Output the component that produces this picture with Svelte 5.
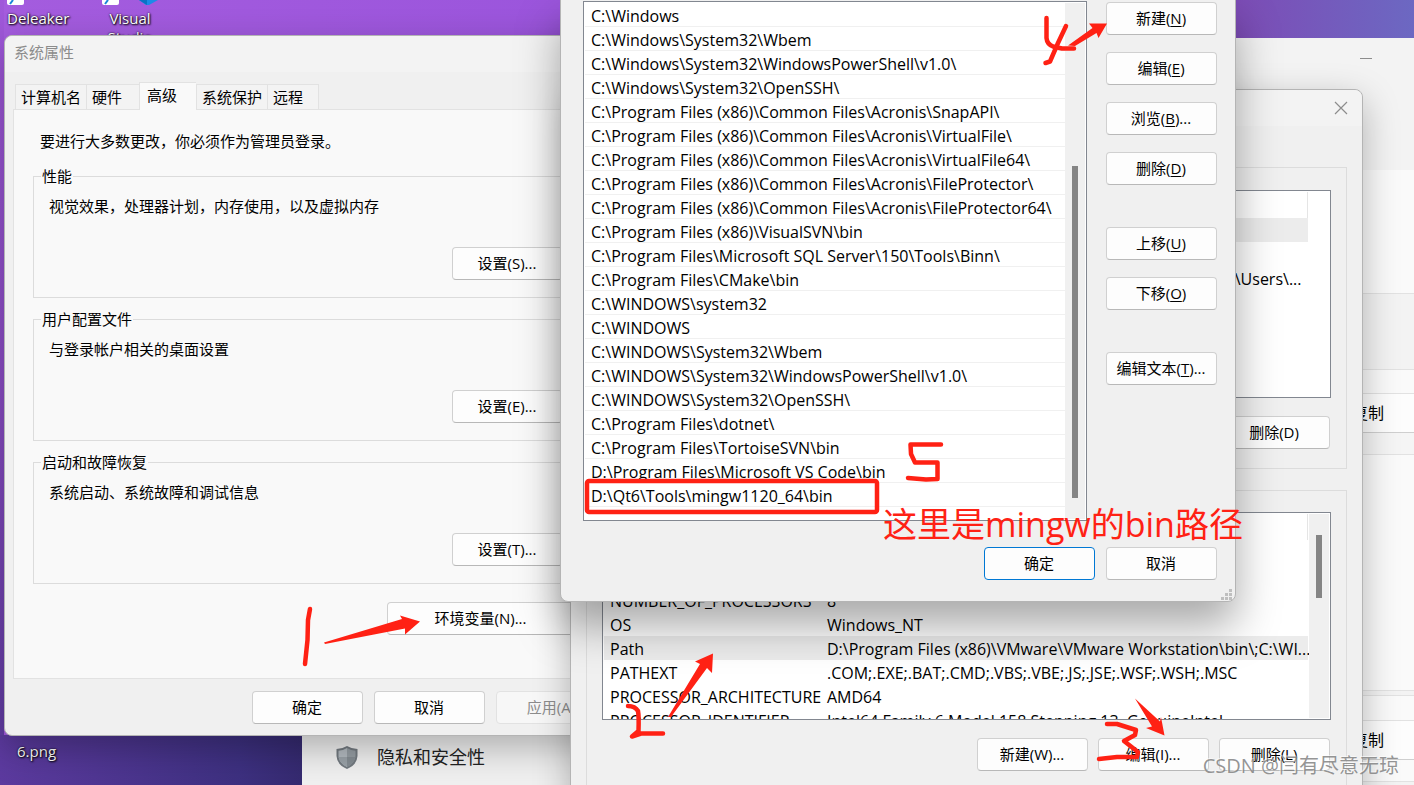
<script>
  const tabs = ['计算机名', '硬件', '高级', '系统保护', '远程'];
  let activeTab = '高级';

  const groups = [
    { title: '性能', text: '视觉效果，处理器计划，内存使用，以及虚拟内存', button: '设置(S)...' },
    { title: '用户配置文件', text: '与登录帐户相关的桌面设置', button: '设置(E)...' },
    { title: '启动和故障恢复', text: '系统启动、系统故障和调试信息', button: '设置(T)...' }
  ];

  const paths = [
    'C:\\Windows',
    'C:\\Windows\\System32\\Wbem',
    'C:\\Windows\\System32\\WindowsPowerShell\\v1.0\\',
    'C:\\Windows\\System32\\OpenSSH\\',
    'C:\\Program Files (x86)\\Common Files\\Acronis\\SnapAPI\\',
    'C:\\Program Files (x86)\\Common Files\\Acronis\\VirtualFile\\',
    'C:\\Program Files (x86)\\Common Files\\Acronis\\VirtualFile64\\',
    'C:\\Program Files (x86)\\Common Files\\Acronis\\FileProtector\\',
    'C:\\Program Files (x86)\\Common Files\\Acronis\\FileProtector64\\',
    'C:\\Program Files (x86)\\VisualSVN\\bin',
    'C:\\Program Files\\Microsoft SQL Server\\150\\Tools\\Binn\\',
    'C:\\Program Files\\CMake\\bin',
    'C:\\WINDOWS\\system32',
    'C:\\WINDOWS',
    'C:\\WINDOWS\\System32\\Wbem',
    'C:\\WINDOWS\\System32\\WindowsPowerShell\\v1.0\\',
    'C:\\WINDOWS\\System32\\OpenSSH\\',
    'C:\\Program Files\\dotnet\\',
    'C:\\Program Files\\TortoiseSVN\\bin',
    'D:\\Program Files\\Microsoft VS Code\\bin',
    'D:\\Qt6\\Tools\\mingw1120_64\\bin'
  ];

  // gap: extra room above the button
  const actions = [
    { label: '新建', key: 'N' },
    { label: '编辑', key: 'E' },
    { label: '浏览', key: 'B', more: true },
    { label: '删除', key: 'D' },
    { label: '上移', key: 'U', gap: true },
    { label: '下移', key: 'O' },
    { label: '编辑文本', key: 'T', more: true, gap: true }
  ];

  const systemVars = [
    ['', ''],
    ['', ''],
    ['NUMBER_OF_PROCESSORS', '8'],
    ['OS', 'Windows_NT'],
    ['Path', 'D:\\Program Files (x86)\\VMware\\VMware Workstation\\bin\\;C:\\WI...'],
    ['PATHEXT', '.COM;.EXE;.BAT;.CMD;.VBS;.VBE;.JS;.JSE;.WSF;.WSH;.MSC'],
    ['PROCESSOR_ARCHITECTURE', 'AMD64'],
    ['PROCESSOR_IDENTIFIER', 'Intel64 Family 6 Model 158 Stepping 13, GenuineIntel']
  ];
</script>

<main class="desktop">
  <div class="shortcut deleaker">
    <svg width="18" height="5" viewBox="0 0 18 5"><path d="M0 0h17v3q0 2-2 2H2Q0 5 0 3z" fill="#fff" /><path d="M3 4 6 0" stroke="#1a86d8" stroke-width="2" /></svg>
    <span>Deleaker</span>
  </div>
  <div class="shortcut visual">
    <svg width="56" height="5" viewBox="0 0 56 5"><path d="M0 0h17v3q0 2-2 2H2Q0 5 0 3z" fill="#fff" /><path d="M3 4 6 0" stroke="#1a86d8" stroke-width="2" /><path d="M37 0h19l-9 5h-3z" fill="#1b8be8" /><path d="M37 0h8v5z" fill="#0b72c4" /></svg>
    <span>Visual<br />Studio</span>
  </div>
  <div class="shortcut png"><span>6.png</span></div>

  <section class="settings">
    <header><button class="minimize" aria-label="最小化"></button></header>
    <div class="block b1"></div>
    <div class="block b2"></div>
    <div class="block b3"></div>
    <div class="card"><button>复制</button></div>
    <div class="block b4"></div>
    <div class="block b5"></div>
    <div class="block b6"></div>
    <div class="block b7"></div>
    <div class="card"><button>复制</button></div>
    <div class="block b8"></div>
    <a class="privacy" href="#privacy">
      <svg width="24" height="25" viewBox="0 0 24 25">
        <path d="M12 1Q7 4 1.500 4V11Q2 20 12 24Q22 20 22.500 11V4Q17 4 12 1z" fill="#737a80" />
        <path d="M12 3Q8 5.500 3.500 5.700V11Q4 18 12 22z" fill="#b3bac0" />
        <path d="M12 3Q16 5.500 20.500 5.700V11Q20 18 12 22z" fill="#959da3" />
        <path d="M3.500 12H12V22Q5 19 3.500 12z" fill="#9aa2a8" />
        <path d="M12 12H20.400Q19 19 12 22z" fill="#848c92" />
      </svg>
      隐私和安全性
    </a>
  </section>

  <section class="window system">
    <header class="title">系统属性</header>
    <div class="tabs" role="tablist">
      {#each tabs as tab}
        <button role="tab" aria-selected={tab === activeTab} class:active={tab === activeTab} on:click={() => (activeTab = tab)}>{tab}</button>
      {/each}
    </div>
    <div class="panel">
      <p>要进行大多数更改，你必须作为管理员登录。</p>
      {#each groups as group}
        <fieldset class="group">
          <legend>{group.title}</legend>
          <span>{group.text}</span>
          <button class="btn">{group.button}</button>
        </fieldset>
      {/each}
      <button class="btn env">环境变量(N)...</button>
    </div>
    <footer>
      <button class="btn">确定</button>
      <button class="btn">取消</button>
      <button class="btn" disabled>应用(A)</button>
    </footer>
  </section>

  <section class="window variables">
    <header class="title">
      <button class="close" aria-label="关闭">
        <svg width="14" height="14" viewBox="0 0 14 14"><path d="M1 1 13 13M13 1 1 13" stroke="#8c8c8c" stroke-width="1.200" /></svg>
      </button>
    </header>
    <div class="varbox">
      <div class="listview">
        <table>
          <thead><tr><th></th><th></th></tr></thead>
          <tbody>
            <tr class="selected"><td></td><td></td></tr>
            <tr><td></td><td></td></tr>
            <tr><td></td><td class="right">C:\Users\...</td></tr>
          </tbody>
        </table>
      </div>
      <div class="buttons"><button class="btn">删除(D)</button></div>
    </div>
    <div class="varbox">
      <div class="listview">
        <table>
          <thead><tr><th></th><th></th></tr></thead>
          <tbody>
            {#each systemVars as [name, value]}
              <tr class:selected={name === 'Path'}><td>{name}</td><td>{value}</td></tr>
            {/each}
          </tbody>
        </table>
        <div class="track"><div class="thumb"></div></div>
      </div>
      <div class="buttons">
        <button class="btn">新建(W)...</button>
        <button class="btn">编辑(I)...</button>
        <button class="btn">删除(L)</button>
      </div>
    </div>
  </section>

  <section class="window path">
    <div class="editor">
      <div class="pathlist">
        <ul>
          {#each paths as path}
            <li>{path}</li>
          {/each}
        </ul>
        <div class="track"><div class="thumb"></div></div>
      </div>
      <div class="actions">
        {#each actions as a}
          <button class="btn" class:gap={a.gap}>{a.label}(<u>{a.key}</u>){a.more ? '...' : ''}</button>
        {/each}
      </div>
    </div>
    <footer>
      <button class="btn primary">确定</button>
      <button class="btn">取消</button>
    </footer>
    <svg class="grip" width="12" height="12" viewBox="0 0 12 12" fill="#bfbfbf">
      <path d="M8 0h3v3H8zM4 4h3v3H4zM8 4h3v3H8zM0 8h3v3H0zM4 8h3v3H4zM8 8h3v3H8z" />
    </svg>
  </section>

  <!-- hand-drawn step marks -->
  <svg class="marks" aria-hidden="true">
    <g fill="none" stroke="#ff2114" stroke-width="4.500" stroke-linecap="round" stroke-linejoin="round">
      <path d="M310 609 308 620 307.500 640 305 664" />
      <path d="M628 706Q635 706 638 711Q639 716 638.500 731L632 736.500 641 733.500H663" />
      <path d="M1107 724H1117L1136 730 1135 735 1124 741 1138 752 1137 757H1117L1099 759" />
      <path d="M1046.500 18V38Q1047 44 1053 46.500L1062 48.500H1074" />
      <path d="M1066 26 1058 43 1050 61.500 1045.500 63" />
      <path d="M941 444.500H910.500L911 454 915 462.500H937.500V479L926 479.500 908 478" />
      <rect x="587" y="481" width="290" height="31" rx="2" />
    </g>
    <g fill="#ff2114">
      <path d="M324 642.500 402 619 400 615.500 420 621.500 405 634.500V628.500L325 644z" />
      <path d="M668 717 700 664 695 661.500 713 653.500 712 673 707 668 671 717z" />
      <path d="M1135 698.500 1160 721.500 1161 717 1164.500 735.500 1146 728 1152 726.500z" />
      <path d="M1068 45.500 1092.500 28 1089 23.500H1107L1098.500 38 1096.500 33 1075 46z" />
    </g>
  </svg>
  <div class="note">这里是mingw的bin路径</div>
  <div class="watermark">CSDN @闫有尽意无琼</div>
</main>

<style>
  :global(body) {
    margin: 0;
  }
  .desktop {
    position: relative;
    min-height: 100vh;
    overflow: hidden;
    background:
      linear-gradient(to right, #5c3a9f, #3d3080 240px, #352a70 302px) bottom left / 302px 50px no-repeat,
      linear-gradient(#a058da, #8a4cc4 50%, #5c3a9f) left / 4px 100% no-repeat,
      linear-gradient(to right, #a45cde, #9b55dc 560px, #7d4cb6 1235px, #6c68c2);
    font: 15px/24px "Open Sans", "Noto Sans CJK SC", sans-serif;
    color: #000;
  }
  button {
    font: inherit;
    color: inherit;
    margin: 0;
    padding: 0;
    border: none;
    background: none;
  }
  .btn {
    box-sizing: border-box;
    width: 111px;
    height: 33px;
    padding: 0 1px 2px 0;
    border: 1px solid #d0d0d0;
    border-bottom-color: #b8b8b8;
    border-radius: 4px;
    background: #fdfdfd;
    white-space: nowrap;
  }
  .btn:hover {
    background: #e5f1fb;
  }
  .btn:disabled {
    color: #8c8c8c;
    border-color: #e2e2e2;
    background: #f7f7f7;
  }
  .btn.primary {
    border-color: #0078d4;
  }
  .btn u {
    text-underline-offset: 2px;
  }

  .shortcut {
    position: absolute;
    color: #fff;
    line-height: 19px;
    font-size: 15px;
    text-align: center;
    text-shadow: 1px 1px 2px #000, 0 0 2px #000;
  }
  .shortcut svg {
    display: block;
    margin-bottom: 4px;
  }
  .deleaker {
    left: 7px;
    top: 0;
  }
  .visual {
    left: 102px;
    top: 0;
  }
  .png {
    left: 17px;
    top: 742px;
  }

  .settings {
    position: absolute;
    left: 302px;
    right: 0;
    top: 38px;
    bottom: 0;
    background: #f3f3f3;
  }
  .settings header {
    height: 132px;
    text-align: right;
  }
  .minimize {
    width: 12px;
    height: 1px;
    margin: 20px 42px 0 0;
    vertical-align: top;
    background: #8c8c8c;
  }
  .block {
    box-sizing: border-box;
    background: #fafafa;
    border-bottom: 1px solid #e2e2e2;
  }
  .b1 { height: 124px; }
  .b2 { height: 76px; background: #f3f3f3; }
  .b3 { height: 24px; }
  .b4 { height: 22px; background: #f5f5f5; }
  .b5 { height: 236px; }
  .b6 { height: 5px; background: #f3f3f3; }
  .b7 { height: 25px; }
  .b8 { height: 22px; }
  .card {
    box-sizing: border-box;
    height: 39px;
    padding-right: 30px;
    border-bottom: 1px solid #cfcfcf;
    background: #fdfdfd;
    text-align: right;
    font-size: 16px;
    line-height: 38px;
  }
  .privacy {
    position: absolute;
    left: 0;
    bottom: 0;
    box-sizing: border-box;
    display: flex;
    align-items: center;
    gap: 18px;
    width: 268px;
    height: 56px;
    padding-left: 33px;
    background: #f0f0f0;
    color: #222;
    font-size: 18px;
    text-decoration: none;
  }

  .window {
    position: absolute;
    box-sizing: border-box;
    border: 1px solid #b4b4b4;
    border-radius: 8px;
    background: #f0f0f0;
    box-shadow: 0 12px 36px rgba(0, 0, 0, 0.28);
  }
  .title {
    height: 36px;
    padding: 0 9px;
    border-radius: 8px 8px 0 0;
    background: #f3f3f3;
    color: #8c8c8c;
    line-height: 32px;
  }

  .system {
    left: 4px;
    top: 35px;
    width: 614px;
  }
  .tabs {
    display: flex;
    align-items: flex-end;
    padding: 10px 0 0 10px;
  }
  .tabs button {
    height: 25px;
    padding: 0 5px;
    border: 1px solid #e2e2e2;
    border-bottom: none;
    border-right: none;
    background: #f3f3f3;
  }
  .tabs button:nth-child(2) {
    padding-right: 17px;
  }
  .tabs button:last-child {
    padding-right: 15px;
    border-right: 1px solid #e2e2e2;
  }
  .tabs .active {
    position: relative;
    height: 28px;
    margin-bottom: -1px;
    padding: 0 19px 3px 7px;
    background: #f9f9f9;
  }
  .panel {
    display: flex;
    flex-direction: column;
    box-sizing: border-box;
    height: 570px;
    margin: 0 10px 0 8px;
    padding: 19px 20px 0 19px;
    border: 1px solid #e2e2e2;
    background: #f9f9f9;
  }
  .panel p {
    margin: 0 0 11px 7px;
  }
  .group {
    display: flex;
    flex-direction: column;
    box-sizing: border-box;
    height: 134px;
    min-width: 0;
    margin: 0 0 9px;
    padding: 6px 22px 0 15px;
    border: 1px solid #dcdcdc;
  }
  .group legend {
    margin-left: -8px;
    padding: 0 1px;
  }
  .group .btn {
    align-self: flex-end;
    margin-top: 29px;
  }
  .env {
    width: 188px;
    margin: 9px 11px 0 auto;
  }
  .system footer {
    display: flex;
    justify-content: flex-end;
    gap: 11px;
    padding: 12px 10px 11px;
  }

  .variables {
    left: 570px;
    top: 89px;
    width: 793px;
    height: 760px;
  }
  .variables .title {
    display: flex;
    justify-content: flex-end;
    align-items: center;
    padding-right: 14px;
    margin-bottom: 41px;
  }
  .close svg {
    display: block;
  }
  .varbox {
    box-sizing: border-box;
    height: 302px;
    margin: 0 15px 21px;
    padding: 22px 15px 0;
    border: 1px solid #dcdcdc;
  }
  .varbox:last-child {
    height: 320px;
    padding-top: 21px;
  }
  .listview {
    display: flex;
    box-sizing: border-box;
    height: 208px;
    overflow: hidden;
    padding: 1px;
    border: 1px solid #828790;
    background: #fff;
    font-size: 16px;
  }
  table {
    width: 704px;
    flex: none;
    align-self: flex-start;
    border-collapse: collapse;
    table-layout: fixed;
  }
  th {
    height: 26px;
    padding: 0;
  }
  th:first-child {
    width: 217px;
  }
  th:last-child {
    border-right: 1px solid #e5e5e5;
  }
  td {
    box-sizing: border-box;
    height: 24px;
    padding: 2px 0 0 6px;
    line-height: 22px;
    white-space: nowrap;
  }
  td.right {
    padding-right: 6px;
    text-align: right;
  }
  .selected {
    background: #ececec;
  }
  .track {
    width: 20px;
    margin-left: auto;
    background: #f0f0f0;
  }
  .thumb {
    width: 6px;
    margin-left: 7px;
    background: #858585;
  }
  .listview .thumb {
    height: 63px;
    margin-top: 21px;
  }
  .buttons {
    display: flex;
    justify-content: flex-end;
    gap: 10px;
    padding: 18px 1px 0 0;
  }

  .path {
    left: 560px;
    top: -1px;
    width: 676px;
    padding: 1px 18px 21px 22px;
    border-radius: 0 0 8px 8px;
    box-shadow: 0 24px 44px rgba(0, 0, 0, 0.34);
  }
  .editor {
    display: flex;
    justify-content: space-between;
  }
  .pathlist {
    display: flex;
    box-sizing: border-box;
    width: 504px;
    height: 520px;
    padding: 1px;
    border: 1px solid #828790;
    background: #fff;
    font-size: 16px;
  }
  ul {
    flex: 1;
    margin: 0;
    padding: 0;
    list-style: none;
  }
  li {
    box-sizing: border-box;
    height: 24px;
    padding-left: 6px;
    border-bottom: 1px solid #f0f0f0;
    line-height: 26px;
    white-space: nowrap;
  }
  .pathlist .thumb {
    height: 332px;
    margin-top: 163px;
  }
  .actions {
    display: flex;
    flex-direction: column;
    gap: 17px;
    padding-top: 1px;
  }
  .actions .gap {
    margin-top: 25px;
  }
  .path footer {
    display: flex;
    justify-content: flex-end;
    gap: 11px;
    padding-top: 26px;
  }
  .grip {
    position: absolute;
    right: 2px;
    bottom: 0;
  }

  .marks {
    position: absolute;
    left: 0;
    top: 0;
    width: 100%;
    height: 100%;
    pointer-events: none;
  }
  .note {
    position: absolute;
    left: 883px;
    top: 504px;
    color: #ff2114;
    font-size: 34px;
    line-height: 40px;
    white-space: nowrap;
  }
  .watermark {
    position: absolute;
    right: 15px;
    bottom: 7px;
    color: rgba(130, 130, 130, 0.85);
    font-size: 20px;
    text-shadow: -1px -1px 0 rgba(255, 255, 255, 0.6);
    white-space: nowrap;
  }
</style>
